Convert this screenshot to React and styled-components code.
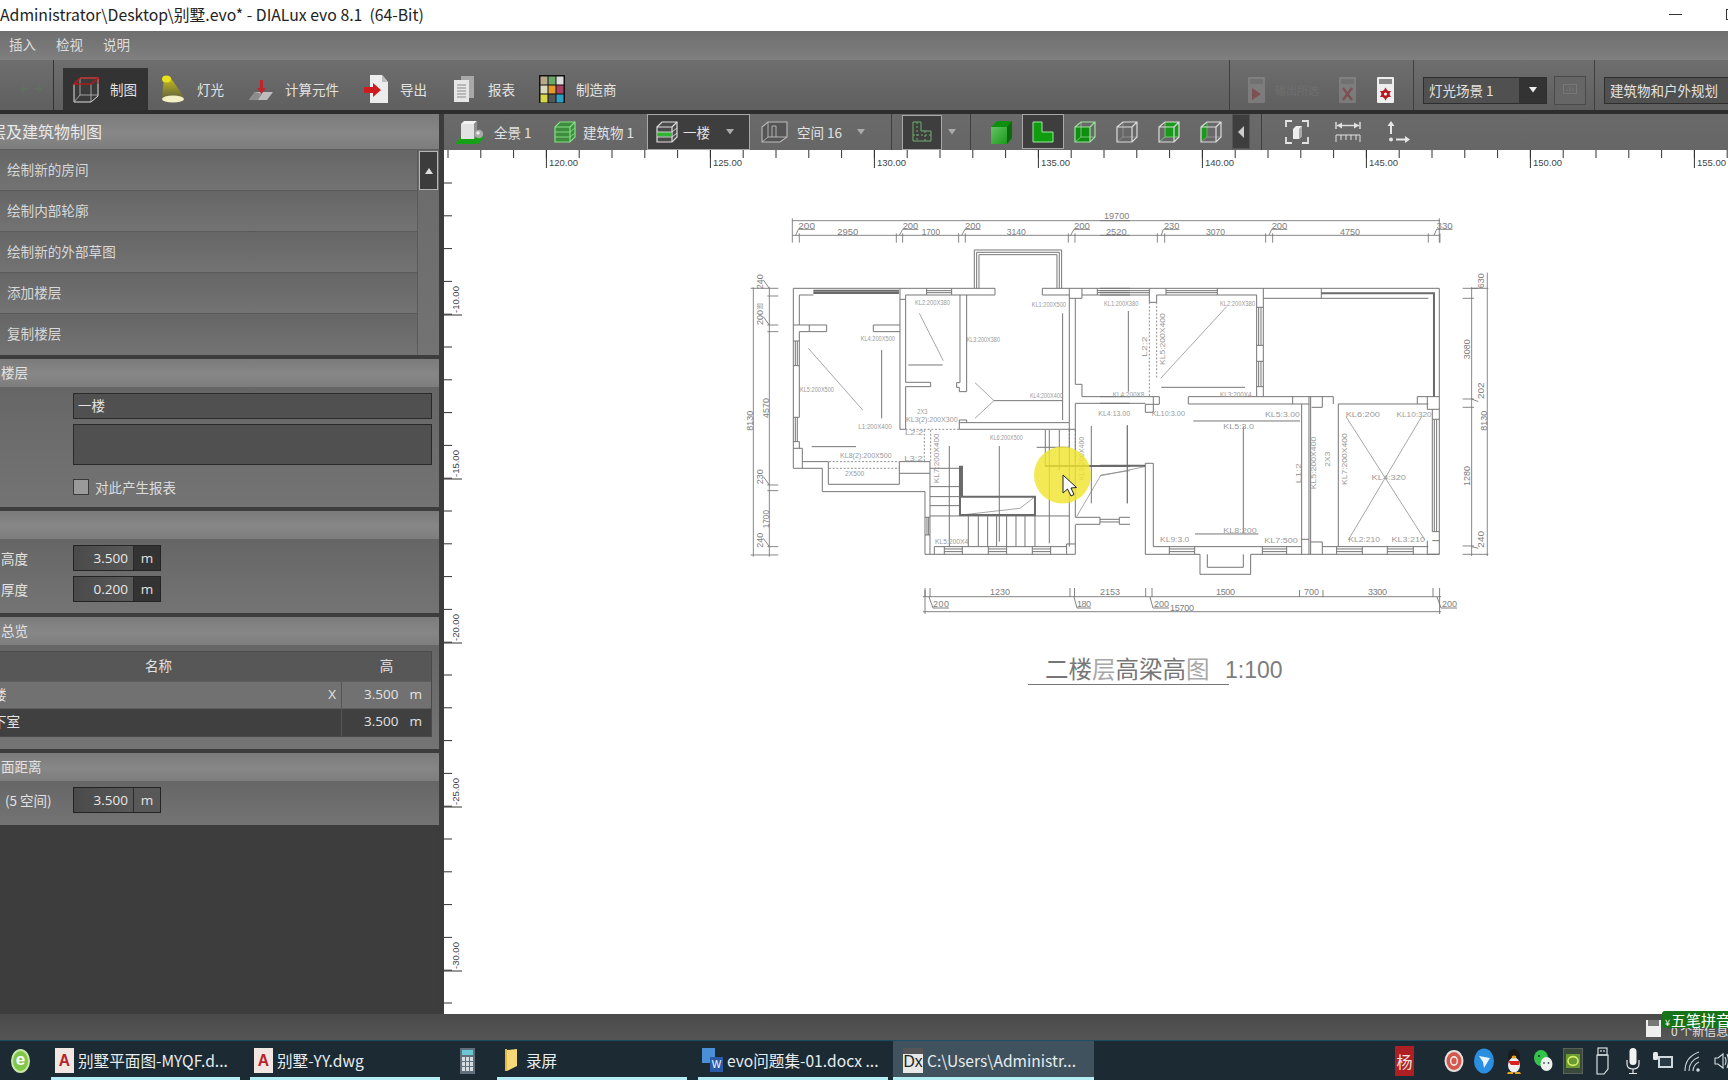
import styled, { createGlobalStyle } from "styled-components";

const GlobalStyle = createGlobalStyle`
  html, body {
    margin: 0;
    padding: 0;
    background: #3c3c3c;
    overflow: hidden;
  }
  * {
    box-sizing: border-box;
  }
`;

const uiFont = `"Noto Sans CJK SC", "Open Sans", "Liberation Sans", sans-serif`;
const numFont = `"Open Sans", "Noto Sans CJK SC", sans-serif`;

/* ---------- small drawn icons ---------- */

function Cube({ front = "none", back = "none", left = "none", stroke = "#ddd", inner = "#aaa", size = 24 }) {
  return (
    <svg width={size} height={size} viewBox="0 0 24 24">
      <path d="M8 2 H22 V17 H8 Z" fill={back} />
      <path d="M2 7 L8 2 V17 L2 22 Z" fill={left} />
      <path d="M2 7 H17 V22 H2 Z" fill={front} />
      <path d="M8 2 V17 H22 M8 17 L2 22" fill="none" stroke={inner} strokeWidth="0.8" />
      <path d="M2 7 L8 2 H22 V17 L17 22 H2 Z M2 7 H17 V22 M17 7 L22 2" fill="none" stroke={stroke} strokeWidth="1.2" />
    </svg>
  );
}

function DrawIcon() {
  return (
    <svg width="26" height="30" viewBox="0 0 26 30">
      <path d="M1 10 L7 4 H25 V22 L18 28 H1 Z" fill="#3a3a3a" stroke="#ddd" strokeWidth="1" />
      <path d="M18 10 V28 M7 4 V21 H25 M7 21 L1 28" fill="none" stroke="#bbb" strokeWidth="0.8" />
      <path d="M1 10 L7 4 H25 L18 10 Z M1 10 H18" fill="none" stroke="#b01c1c" strokeWidth="1.6" />
      <path d="M25 4 V10" stroke="#b01c1c" strokeWidth="1" />
    </svg>
  );
}

function LightIcon() {
  return (
    <svg width="26" height="30" viewBox="0 0 26 30">
      <defs>
        <linearGradient id="beam" x1="0" y1="0" x2="0" y2="1">
          <stop offset="0" stopColor="#c9c21a" />
          <stop offset="1" stopColor="#6b6a3c" />
        </linearGradient>
      </defs>
      <path d="M4 5 L10 3 L24 23 H2 Z" fill="url(#beam)" />
      <ellipse cx="6.5" cy="5" rx="4.5" ry="3.5" fill="#e8e21c" />
      <ellipse cx="13" cy="25" rx="11" ry="3.6" fill="#f3f0c4" />
    </svg>
  );
}

function CalcIcon() {
  return (
    <svg width="26" height="26" viewBox="0 0 26 26">
      <path d="M7 16 H25 L19 24 H1 Z" fill="#bdbdbd" />
      <path d="M7 16 L1 24 H10 L14 18 Z" fill="#8c8c8c" />
      <path d="M12 4 H15 V12 H18 L13.5 18 L9 12 H12 Z" fill="#c0242a" />
    </svg>
  );
}

function ExportIcon() {
  return (
    <svg width="26" height="30" viewBox="0 0 26 30">
      <path d="M7 1 H19 L25 8 V29 H7 Z" fill="#ececec" />
      <path d="M19 1 L25 8 H19 Z" fill="#bdbdbd" />
      <path d="M1 13 H10 V9 L18 16 L10 23 V19 H1 Z" fill="#cc1c20" />
    </svg>
  );
}

function ReportIcon() {
  return (
    <svg width="22" height="28" viewBox="0 0 22 28">
      <rect x="8" y="1" width="13" height="22" fill="#a8a8a8" />
      <rect x="1" y="5" width="15" height="22" fill="#e6e6e6" />
      <path d="M4 10 H13 M4 13 H13 M4 16 H13 M4 19 H13 M4 22 H13" stroke="#8a8a8a" strokeWidth="1.2" />
    </svg>
  );
}

function MakerIcon() {
  const cells = ["#b9a98a", "#6aa86a", "#dcdcdc", "#d9d9c0", "#e39b2c", "#a84060", "#d6d84a", "#555", "#2f9fc4"];
  return (
    <svg width="26" height="28" viewBox="0 0 26 28">
      <rect width="26" height="28" fill="#111" />
      {cells.map((c, i) => (
        <rect key={i} x={1.5 + (i % 3) * 8} y={1.5 + Math.floor(i / 3) * 9} width="7" height="8" fill={c} />
      ))}
    </svg>
  );
}

function PhoneIcon({ glyph, dim }) {
  return (
    <svg width="17" height="26" viewBox="0 0 17 26" opacity={dim ? 0.28 : 1}>
      <rect width="17" height="26" rx="1" fill={dim ? "#bbb" : "#eee"} />
      <rect x="2" y="2" width="13" height="5" fill="#888" />
      {glyph === "play" && <path d="M4 11 L13 17 L4 23 Z" fill="#c02028" />}
      {glyph === "x" && <path d="M4 11 L13 23 M13 11 L4 23" stroke="#c02028" strokeWidth="2.4" />}
      {glyph === "gear" && (
        <>
          <circle cx="8.5" cy="17" r="4" fill="#b81a22" />
          <path d="M8.5 10.5 L10.5 14 H6.5 Z M8.5 23.5 L10.5 20 H6.5 Z M3 14 H7 L5 17.5 Z M14 14 H10 L12 17.5 Z M3 20 H7 L5 16.5 Z M14 20 H10 L12 16.5 Z" fill="#b81a22" />
          <circle cx="8.5" cy="17" r="1.6" fill="#eee" />
        </>
      )}
    </svg>
  );
}

function SceneIcon() {
  return (
    <svg width="30" height="28" viewBox="0 0 30 28">
      <path d="M6 19 H30 L23 26 H0 Z" fill="#16a016" />
      <rect x="6" y="6" width="13" height="15" fill="#e2e2e2" />
      <path d="M6 6 L9 3 H22 L19 6 Z" fill="#f3f3f3" />
      <path d="M19 6 L22 3 V18 L19 21 Z" fill="#8f8f8f" />
      <circle cx="24" cy="16" r="4.2" fill="#a9a9a9" />
      <circle cx="23" cy="15" r="1.8" fill="#e8e8e8" />
    </svg>
  );
}

function StackIcon({ floors }) {
  const edge = floors ? "#ddd" : "#86e086";
  return (
    <svg width="24" height="24" viewBox="0 0 24 24">
      <path d="M2 7 L7 2 H22 V17 L17 22 H2 Z" fill={floors ? "#4a4a4a" : "#3e8c3e"} stroke={edge} strokeWidth="1.2" />
      <path d="M2 7 H17 V22 M17 7 L22 2" fill="none" stroke={edge} strokeWidth="1.2" />
      {floors && <rect x="2.6" y="12" width="14" height="4.6" fill="#2fb52f" />}
      <path d="M2 12 H17 M2 17 H17 M17 12 L22 8 M17 17 L22 13" stroke={edge} strokeWidth="0.9" />
    </svg>
  );
}

function RoomIcon() {
  return (
    <svg width="28" height="24" viewBox="0 0 28 24">
      <path d="M2 7 L8 2 H27 V17 L20 22 H2 Z" fill="#555" stroke="#bbb" strokeWidth="1.1" />
      <path d="M8 2 V17 H27 M8 17 L2 22 M12 6 V17 M16 6 V17 M12 6 H16" fill="none" stroke="#bbb" strokeWidth="0.9" />
    </svg>
  );
}

function PlanIcon() {
  return (
    <svg width="24" height="24" viewBox="0 0 24 24" fill="none" stroke="#6fae6f" strokeWidth="1">
      <path d="M3 2 H11 V11 H21 V21 H3 Z" />
      <path d="M7 2 V21 M3 15 H21 M15 11 V21" strokeDasharray="2 2" />
    </svg>
  );
}

function SolidLIcon() {
  return (
    <svg width="24" height="24" viewBox="0 0 24 24">
      <path d="M2 2 H11 V12 H22 V22 H2 Z" fill="#0f9c0f" stroke="#9eea9e" strokeWidth="1" />
    </svg>
  );
}

function SolidCubeIcon() {
  return (
    <svg width="24" height="26" viewBox="0 0 24 26">
      <defs>
        <linearGradient id="cubeFace" x1="0" y1="0" x2="1" y2="1">
          <stop offset="0" stopColor="#62c462" />
          <stop offset="1" stopColor="#1c9a1c" />
        </linearGradient>
      </defs>
      <path d="M2 8 L8 2 H23 L18 8 Z" fill="#0f8f0f" />
      <path d="M18 8 L23 2 V19 L18 25 Z" fill="#0a6b0a" />
      <rect x="2" y="8" width="16" height="17" fill="url(#cubeFace)" />
    </svg>
  );
}

function FitIcon() {
  return (
    <svg width="24" height="24" viewBox="0 0 24 24">
      <path d="M1 7 V1 H7 M17 1 H23 V7 M23 17 V23 H17 M7 23 H1 V17" fill="none" stroke="#e4e4e4" strokeWidth="1.8" />
      <path d="M8 9 L11 6 H17 V16 L14 19 H8 Z" fill="#eee" />
      <path d="M14 9 L17 6 V16 L14 19 Z" fill="#aaa" />
    </svg>
  );
}

function MeasureIcon() {
  return (
    <svg width="26" height="24" viewBox="0 0 26 24" fill="none" stroke="#e2e2e2">
      <path d="M1 2 V9 M25 2 V9" strokeWidth="1.4" />
      <path d="M2 5.5 H24" strokeWidth="1.4" />
      <path d="M2 5.5 L7 2.5 V8.5 Z M24 5.5 L19 2.5 V8.5 Z" fill="#e2e2e2" stroke="none" />
      <path d="M1 22 V15 H25 V22 M6 15 V20 M11 15 V20 M16 15 V20 M21 15 V20" strokeWidth="1" />
    </svg>
  );
}

function AxisIcon() {
  return (
    <svg width="24" height="24" viewBox="0 0 24 24" fill="#e6e6e6">
      <path d="M4 1 L7.5 6 H5 V14 H3 V6 H0.5 Z" />
      <circle cx="4" cy="19.5" r="2" />
      <path d="M9 18.5 H18 V16 L23 19.5 L18 23 V20.5 H9 Z" />
    </svg>
  );
}

function BackArrows() {
  return (
    <svg width="26" height="10" viewBox="0 0 26 10" opacity="0.45">
      <path d="M1 5 L6 1 V9 Z M25 5 L20 1 V9 Z" fill="#5d7a5d" />
      <path d="M6 5 H11 M15 5 H20" stroke="#5d7a5d" strokeWidth="2" />
    </svg>
  );
}

function CaretDown({ color = "#aaa", size = 8 }) {
  return (
    <svg width={size} height={size * 0.7} viewBox="0 0 10 7">
      <path d="M0 0 H10 L5 7 Z" fill={color} />
    </svg>
  );
}

function Folder() {
  return (
    <svg width="14" height="24" viewBox="0 0 14 24">
      <path d="M1 1 H3 V23 H1 Z" fill="#e3b93f" />
      <path d="M3 2 L13 1 V18 L3 23 Z" fill="#f6d878" />
    </svg>
  );
}

function CalcAppIcon() {
  return (
    <svg width="15" height="26" viewBox="0 0 15 26">
      <rect width="15" height="26" fill="#5f6f7c" />
      <rect x="2" y="2" width="11" height="5" fill="#6cc6d6" />
      {[0, 1, 2, 3, 4, 5, 6, 7, 8].map((i) => (
        <rect key={i} x={2 + (i % 3) * 4} y={9 + Math.floor(i / 3) * 5} width="3" height="4" fill="#d5dde2" />
      ))}
    </svg>
  );
}

function TrayIcon({ kind }) {
  if (kind === "rec") {
    return (
      <svg width="20" height="24" viewBox="0 0 20 24">
        <ellipse cx="10" cy="12" rx="9.5" ry="11" fill="#e6e1de" />
        <ellipse cx="10" cy="12" rx="7.5" ry="9" fill="#d4584c" />
        <ellipse cx="10" cy="12" rx="4" ry="5" fill="#eee" />
        <ellipse cx="10" cy="12" rx="2.6" ry="3.2" fill="#d4584c" />
      </svg>
    );
  }
  if (kind === "blue") {
    return (
      <svg width="20" height="26" viewBox="0 0 20 26">
        <ellipse cx="10" cy="13" rx="10" ry="12.5" fill="#2a8fe0" />
        <path d="M5 8 L16 10 L10 20 L9 14 Z" fill="#e8f4ff" />
      </svg>
    );
  }
  if (kind === "qq") {
    return (
      <svg width="16" height="26" viewBox="0 0 16 26">
        <ellipse cx="8" cy="9" rx="6" ry="8" fill="#1a1a1a" />
        <ellipse cx="8" cy="17" rx="6" ry="7.5" fill="#eee" />
        <path d="M2 13 H14 L13 17 H5 Z" fill="#d8201c" />
        <ellipse cx="8" cy="9" rx="2.4" ry="1.5" fill="#e8a41c" />
        <path d="M2 24 H7 V26 H1 Z M9 24 H14 L15 26 H9 Z" fill="#e8a41c" />
      </svg>
    );
  }
  if (kind === "wechat") {
    return (
      <svg width="20" height="24" viewBox="0 0 20 24">
        <ellipse cx="8" cy="9" rx="7" ry="8" fill="#34c44a" />
        <ellipse cx="13.5" cy="15" rx="6" ry="7" fill="#eef2ee" />
        <circle cx="6" cy="7" r="1" fill="#123" />
        <circle cx="11" cy="14" r="0.9" fill="#456" />
        <circle cx="15.5" cy="14" r="0.9" fill="#456" />
      </svg>
    );
  }
  if (kind === "nvidia") {
    return (
      <svg width="20" height="26" viewBox="0 0 20 26">
        <rect width="20" height="26" rx="2" fill="#3a4a3a" stroke="#777" />
        <rect x="3" y="6" width="14" height="14" fill="#6a9a30" />
        <ellipse cx="10" cy="13" rx="5" ry="4.4" fill="none" stroke="#d3ec6c" strokeWidth="1.6" />
      </svg>
    );
  }
  if (kind === "usb") {
    return (
      <svg width="16" height="28" viewBox="0 0 16 28" fill="none" stroke="#e8eef0" strokeWidth="1.1">
        <rect x="3" y="1" width="9" height="7" />
        <path d="M2 8 H13 V22 L9 27 H2 Z" />
        <path d="M6 3 V5 M9 3 V5" />
      </svg>
    );
  }
  if (kind === "mic") {
    return (
      <svg width="14" height="28" viewBox="0 0 14 28">
        <rect x="3.5" y="1" width="7" height="17" rx="3.5" fill="#f2f2f2" />
        <path d="M1 13 V17 Q1 22 7 22 Q13 22 13 17 V13 M7 22 V26 M3 26.5 H11" fill="none" stroke="#e8e8e8" strokeWidth="1.2" />
      </svg>
    );
  }
  if (kind === "plug") {
    return (
      <svg width="20" height="20" viewBox="0 0 20 20">
        <rect x="5" y="5" width="15" height="12" fill="#cfd8dc" />
        <rect x="7" y="7" width="11" height="8" fill="#2a3a44" />
        <rect x="0" y="1" width="5" height="8" rx="1.5" fill="#e8e8e8" />
      </svg>
    );
  }
  if (kind === "wifi") {
    return (
      <svg width="16" height="24" viewBox="0 0 16 24" fill="none" stroke="#cfd8dc" strokeWidth="1.1">
        <path d="M1 22 Q1 8 15 3 M5 22 Q5 12 15 8 M9 22 Q9 16 15 13" />
        <circle cx="14" cy="21" r="1.2" fill="#cfd8dc" />
      </svg>
    );
  }
  return (
    <svg width="16" height="24" viewBox="0 0 16 24" fill="none" stroke="#d6dde0" strokeWidth="1.1">
      <path d="M1 9 H4 L9 5 V19 L4 15 H1 Z" />
      <path d="M11 8 Q13 12 11 16 M13 5 Q16 12 13 19" />
    </svg>
  );
}

/* ---------- drawing canvas ---------- */

const wallsA = `
M190 805 V265 H795 V285 H527 M250 285 H208 V375 M190 375 H290 V395 H208 V423 M238 375 V395 M430 375 H510 M430 395 H510 M430 375 V395
M190 423 H208 M190 497 H208 M196 423 V497 M202 423 V497 M208 423 V652 M190 652 H208 M190 725 H208 M196 652 V725 M202 652 V725 M208 725 V745 M190 745 H217 V805 H190
M510 265 V688 M527 285 V547 M527 560 V688 M510 298 H527
M590 265 V285 M665 265 V285 M590 272 H665 M590 278 H665
M733 265 V150 H995 V265 M740 265 V157 H988 V265 M747 265 V164 H981 V265
M937 285 V265 H1200 M937 285 H1018 M1018 265 V668 M1018 295 H1056 V265 M1036 295 V553 H1056 V590 H1200 M1056 285 H1200
M1102 265 V285 M1102 272 H1200 M1102 278 H1200
M690 285 V548 H680 V562 H688 V575 H710 V285
M217 785 H295 M508 785 H600 V1063 M277 805 H217 M277 805 V875 H585 V1063 M295 785 V853 H508 V785 M508 820 H600
M585 1063 H1036 M613 1040 H1010 M613 1040 V1063 M1010 1032 H1036 M1010 1032 V1063 M1036 975 V1063 M1036 973 H1110 M1036 952 H1110 M1110 952 V973 M1168 952 V973 M1110 958 H1168 M1110 966 H1168 M1168 952 H1200 M1168 973 H1200
M643 1040 V1063 M697 1040 V1063 M643 1047 H697 M643 1055 H697 M775 1040 V1063 M830 1040 V1063 M775 1047 H830 M775 1055 H830 M907 1040 V1063 M962 1040 V1063 M907 1047 H962 M907 1055 H962
M585 952 H600 M585 1005 H600 M591 952 V1005 M596 952 V1005
M600 948 H1018 M600 860 H690 M600 890 H690 M600 917 H690 M600 805 H690 M715 948 V1040 M745 948 V1040 M773 948 V1040 M800 948 V1040 M830 948 V1040 M858 948 V1040 M885 948 V1040 M915 948 V1040
M658 738 V1040 M808 738 V1025 M958 690 V1030 M988 690 V810 M946 690 V800 M1018 668 V1040 M920 742 H1018
M510 688 H527 M688 688 H1036 M688 668 H1018 M688 660 H710 V668 M688 660 V688
M1036 610 V952 M1036 610 H1200
M455 450 V655 M245 740 H378 M535 495 H638 M527 547 H602 V560 H527 M792 602 H998 M998 340 V660 M1084 678 V910 M1192 678 V910
`;

const thinA = `M235 445 L398 630 M568 340 L640 482 M735 548 L792 602 L735 655 M1040 950 L1113 825 L1200 812 M695 945 L870 925 L890 910 L915 890`;
const thickA = `M250 272 H507 M250 279 H507 M690 797 V945 H915 V890 H696 V797 M945 798 H1200`;
const dashA = `M527 688 H688 M297 785 H508 M297 805 H508 M583 690 V785 M602 690 V785 M1018 690 V790 M1036 690 V790`;

const wallsB = `
M0 265 H1018 V1063 H452 V1123 H300 V1063 H136 V790 H160 V1040 H605 V612 H265 V590 H470 V285 H170 V307 H148 V265
M0 285 H148 M0 272 H148 M0 278 H148 M198 265 V285 M352 265 V285 M198 272 H352 M198 278 H352
M490 265 V590 M470 322 H490 M476 322 V436 M483 322 V436 M470 436 H490 M470 484 H490 M476 484 V560 M483 484 V560 M470 560 H490 M470 590 H700 V612
M490 295 H985 M664 265 V295 M578 590 V612
M0 590 H178 V613 H160 M160 590 V613 H136 V637 H160 V613 M136 610 H0
M322 1063 V1102 H430 V1063 M208 1040 V1063 M284 1040 V1063 M208 1047 H284 M208 1055 H284 M487 1040 V1063 M560 1040 V1063 M487 1047 H560 M487 1055 H560
M605 612 H628 M627 590 V1063 M605 1018 H627 M632 590 V1063 M632 1026 H667 V1063 M635 622 H667 V590 M605 1040 V1063 M667 1040 H985
M715 612 V1040 M715 612 H985 M952 590 V612 M952 590 H1018 M982 590 V628 H1018 M997 628 V995 M1003 658 V995 M1010 658 V995 M997 658 H1018 M997 995 H1018 M997 1022 H1018 M982 1022 V1063 H1018
M710 1040 V1063 M787 1040 V1063 M710 1047 H787 M710 1055 H787 M862 1040 V1063 M940 1040 V1063 M862 1047 H940 M862 1055 H940
M184 562 H435 M85 333 V575 M82 675 V910 M430 680 V1000 M280 663 H600 M285 1002 H475
`;

const thinB = `M738 650 L975 1020 M965 650 L745 1020 M380 320 L182 535 M0 828 L135 800`;
const thickB = `M664 280 H1002 V590 M0 797 H135`;
const dashB = `M148 307 V590 M170 307 V535`;

const labelsA = [
  [392, 422, "KL4:200X500", 103],
  [555, 315, "KL2:200X380", 105],
  [905, 320, "KL1:200X500", 103],
  [710, 425, "KL3:200X380", 100],
  [210, 575, "KL5:200X500", 102],
  [385, 688, "L1:200X400", 100],
  [900, 595, "KL4:200X400", 98],
  [562, 642, "2X3", 30],
  [528, 665, "KL3(2):200X300", 155],
  [780, 720, "KL6:200X500", 98],
  [330, 775, "KL8(2):200X500", 155],
  [345, 827, "2X500", 58],
  [615, 1032, "KL5:200X4", 100],
  [525, 705, "L2:2", 55],
  [523, 783, "L3:2", 55],
  [628, 850, "KL7:200X400", 150, -90],
  [1062, 840, "KL9:200X400", 130, -90],
];

const labelsB = [
  [12, 318, "KL1:200X380", 103],
  [360, 318, "KL2:200X380", 105],
  [38, 590, "KL4:200X8", 95],
  [360, 590, "KL3:200X4", 95],
  [-5, 648, "KL4:13.00", 95],
  [155, 647, "KL10:3.00", 100],
  [495, 650, "KL5:3.00", 105],
  [370, 688, "KL5:3.0", 92],
  [370, 1000, "KL8:200", 100],
  [180, 1025, "KL9:3.0", 88],
  [493, 1028, "KL7:500", 100],
  [737, 650, "KL6:200", 103],
  [890, 650, "KL10:320", 105],
  [815, 840, "KL4:320", 103],
  [745, 1027, "KL2:210", 95],
  [875, 1027, "KL3:210", 100],
  [196, 495, "KL5:200X400", 155, -90],
  [142, 470, "L2:2", 60, -90],
  [648, 868, "KL5:200X400", 158, -90],
  [690, 800, "2X3", 45, -90],
  [741, 855, "KL7:200X400", 155, -90],
  [602, 850, "L1:2", 60, -90],
];

const dimsA = [
  [205, 88, "200", 50], [322, 105, "2950", 63], [518, 88, "200", 47], [575, 105, "1700", 55],
  [705, 88, "200", 47], [830, 105, "3140", 58], [1032, 88, "200", 48], [1128, 105, "2520", 62],
  [1122, 58, "19700", 76],
  [98, 268, "240", 45, -90], [98, 375, "200", 45, -90], [98, 328, "380", 18, -90], [118, 654, "4570", 60, -90],
  [68, 692, "8130", 60, -90], [98, 853, "230", 45, -90], [118, 985, "1700", 55, -90], [98, 1043, "240", 45, -90],
];

const dimsB = [
  [192, 88, "230", 46], [318, 105, "3070", 57], [515, 88, "200", 47], [720, 105, "4750", 60], [1010, 88, "330", 48],
  [1153, 265, "630", 45, -90], [1110, 478, "3080", 60, -90], [1153, 597, "202", 50, -90],
  [1161, 692, "8130", 60, -90], [1110, 858, "1280", 60, -90], [1153, 1043, "240", 50, -90],
];

const ticksA = `M187 62 H1200 M187 106 H1200 M187 55 V128 M208 100 V128 M499 100 V128 M518 100 V128 M686 100 V128 M706 100 V128 M1015 100 V128 M1035 100 V128
M205 88 H255 M205 88 L197 106 M518 88 H565 M518 88 L508 106 M705 88 H752 M705 88 L695 106 M1032 88 H1080 M1032 88 L1022 106
M70 262 V1070 M118 262 V1070 M62 265 H145 M112 288 H145 M112 375 H145 M112 395 H145 M112 855 H145 M112 872 H145 M112 1040 H145 M62 1065 H145
M118 265 L100 240 M118 375 L100 350 M118 855 L100 830 M118 1040 L100 1015`;

const ticksB = `M0 62 H1020 M0 106 H1020 M1018 55 V128 M172 100 V128 M194 100 V128 M497 100 V128 M518 100 V128 M985 100 V128 M1020 100 V128
M190 88 H238 M190 88 L184 106 M515 88 H562 M515 88 L507 106 M1010 88 H1058 M1010 88 L1002 106
M1115 262 V1068 M1162 218 V1068 M1088 265 H1165 M1088 295 H1122 M1088 597 H1122 M1088 622 H1122 M1088 1038 H1122 M1088 1063 H1165
M1115 265 L1135 265 M1115 597 L1135 605 M1115 1040 L1135 1045`;

function PlanLabels({ items, size = 24, fill = "#9a9a9a" }) {
  return items.map(([x, y, text, len, rot]) => (
    <text
      key={`${x}-${y}`}
      x={x}
      y={y}
      fontSize={size}
      fill={fill}
      fontFamily='"Liberation Sans", sans-serif'
      textLength={len}
      lengthAdjust="spacingAndGlyphs"
      transform={rot ? `rotate(${rot} ${x} ${y})` : undefined}
    >
      {text}
    </text>
  ));
}

function PlanLines({ walls, thin, thick, dash, ticks }) {
  return (
    <g fill="none" stroke="#757575">
      <path d={ticks} strokeWidth="2.6" />
      <path d={walls} strokeWidth="3" />
      <path d={thin} strokeWidth="2.2" stroke="#858585" />
      <path d={thick} strokeWidth="6" stroke="#6a6a6a" />
      <path d={dash} strokeWidth="2.4" strokeDasharray="6 5" />
    </g>
  );
}

function Ruler() {
  const topMinor = [];
  for (let x = 448; x < 1728; x += 32.8) topMinor.push(x);
  const leftMinor = [];
  for (let y = 183; y < 1014; y += 32.8) leftMinor.push(y);
  const topMajor = [120, 125, 130, 135, 140, 145, 150, 155];
  const leftMajor = [-10, -15, -20, -25, -30];
  return (
    <g stroke="#333" strokeWidth="1">
      {topMinor.map((x) => (
        <line key={x} x1={x} y1="150" x2={x} y2="158" />
      ))}
      {leftMinor.map((y) => (
        <line key={y} x1="444" y1={y} x2="452" y2={y} />
      ))}
      {topMajor.map((v, i) => (
        <g key={v}>
          <line x1={546.4 + i * 164} y1="150" x2={546.4 + i * 164} y2="168" />
          <text x={549 + i * 164} y="166" fontSize="9.5" fill="#444" stroke="none" fontFamily='"Liberation Sans", sans-serif'>
            {v}.00
          </text>
        </g>
      ))}
      {leftMajor.map((v, i) => (
        <g key={v}>
          <line x1="444" y1={315 + i * 164} x2="462" y2={315 + i * 164} />
          <text
            x="459"
            y={313 + i * 164}
            fontSize="9.5"
            fill="#444"
            stroke="none"
            fontFamily='"Liberation Sans", sans-serif'
            transform={`rotate(-90 459 ${313 + i * 164})`}
          >
            {v}.00
          </text>
        </g>
      ))}
    </g>
  );
}

function Drawing() {
  return (
    <CanvasSvg viewBox="444 150 1284 864">
      <Ruler />
      <g transform="translate(730 200) scale(0.3333)">
        <PlanLines walls={wallsA} thin={thinA} thick={thickA} dash={dashA} ticks={ticksA} />
        <PlanLabels items={labelsA} />
        <PlanLabels items={dimsA} size={27} fill="#808080" />
      </g>
      <g transform="translate(1100 200) scale(0.3333)">
        <PlanLines walls={wallsB} thin={thinB} thick={thickB} dash={dashB} ticks={ticksB} />
        <PlanLabels items={labelsB} />
        <PlanLabels items={dimsB} size={27} fill="#808080" />
      </g>

      {/* bottom dimension chain */}
      <g stroke="#757575" fill="none" strokeWidth="0.9">
        <path d="M923 596.7 H1441 M923 611.7 H1441 M925 588 V597 M930 588 V597 M925 590 V614 M1070 588 V597 M1074.5 588 V597 M1145.7 588 V597 M1152 588 V597 M1433 588 V597 M1439.6 588 V614 M1299.5 590 V597 M1323 590 V597" />
        <path d="M929 597 L933 608 H949 M1074 597 L1077 608 H1091 M1150 597 L1153 608 H1169 M1437 597 L1441 608 H1457" />
      </g>
      <g fontFamily='"Liberation Sans", sans-serif' fontSize="9" fill="#808080">
        <text x="990" y="595" textLength="20">1230</text>
        <text x="1100" y="595" textLength="20">2153</text>
        <text x="1216" y="595" textLength="19">1500</text>
        <text x="1304" y="595" textLength="15">700</text>
        <text x="1368" y="595" textLength="19">3300</text>
        <text x="933" y="607" textLength="16">200</text>
        <text x="1077" y="607" textLength="14">180</text>
        <text x="1154" y="607" textLength="15">200</text>
        <text x="1170" y="611" textLength="24">15700</text>
        <text x="1442" y="607" textLength="15">200</text>
      </g>

      <text x="1045" y="678" fontSize="23.5" fill="#777" fontFamily='"Noto Sans CJK SC", sans-serif'>
        二楼<tspan fill="#a8a8a8">层</tspan>高梁高<tspan fill="#a8a8a8">图</tspan>
      </text>
      <text x="1225" y="678" fontSize="23" fill="#7d7d7d" fontFamily='"Liberation Sans", sans-serif'>
        1:100
      </text>
      <line x1="1028" y1="684.5" x2="1229" y2="684.5" stroke="#777" strokeWidth="1" />

      {/* pointer highlight */}
      <circle cx="1062.5" cy="475" r="28.5" fill="#f0e42e" opacity="0.82" />
      <path d="M1063 475 L1063 493 L1067.5 489 L1071 496 L1074 494.5 L1071 488 L1076.5 487.5 Z" fill="#fff" stroke="#222" strokeWidth="1" />
    </CanvasSvg>
  );
}

/* ---------- page data ---------- */

const tools = [
  { label: "灯光", Icon: LightIcon },
  { label: "计算元件", Icon: CalcIcon },
  { label: "导出", Icon: ExportIcon },
  { label: "报表", Icon: ReportIcon },
  { label: "制造商", Icon: MakerIcon },
];

const actions = ["绘制新的房间", "绘制内部轮廓", "绘制新的外部草图", "添加楼层", "复制楼层"];

export default function App() {
  return (
    <Page>
      <GlobalStyle />
      <TitleBar>
        <TitleText>Administrator\Desktop\别墅.evo* - DIALux evo 8.1&nbsp;&nbsp;(64-Bit)</TitleText>
        <WindowButtons>
          <MinimizeMark />
          <MaximizeMark />
        </WindowButtons>
      </TitleBar>

      <MenuBar>
        <MenuItem>插入</MenuItem>
        <MenuItem>检视</MenuItem>
        <MenuItem>说明</MenuItem>
      </MenuBar>

      <Toolbar>
        <BackCell>
          <BackArrows />
        </BackCell>
        <ActiveTool>
          <ToolIcon>
            <DrawIcon />
          </ToolIcon>
          <span>制图</span>
        </ActiveTool>
        <ToolGroup>
          {tools.map(({ label, Icon }) => (
            <ToolItem key={label}>
              <ToolIcon>
                <Icon />
              </ToolIcon>
              <span>{label}</span>
            </ToolItem>
          ))}
        </ToolGroup>
        <ToolSection $width={184} $left={18}>
          <PhoneIcon glyph="play" dim />
          <FaintLabel>输出所选</FaintLabel>
          <PhoneIcon glyph="x" dim />
          <GearSlot>
            <PhoneIcon glyph="gear" />
          </GearSlot>
        </ToolSection>
        <ToolSection $width={181} $left={9}>
          <Select $width={124}>
            <SelectText>灯光场景 1</SelectText>
            <SelectArrow>
              <CaretDown color="#eee" />
            </SelectArrow>
          </Select>
          <SceneButton>
            <svg width="14" height="12" viewBox="0 0 14 12" fill="none" stroke="#777">
              <rect x="0.5" y="0.5" width="13" height="9" />
              <path d="M7 7 V3 M4 7 V5 M10 7 V4" />
            </svg>
          </SceneButton>
        </ToolSection>
        <ToolSection $width={134} $left={9}>
          <Select $width={130}>
            <SelectText>建筑物和户外规划</SelectText>
          </Select>
        </ToolSection>
      </Toolbar>

      <Main>
        <Side>
          <SideSection>
            <MainHeader>层及建筑物制图</MainHeader>
            <ActionArea>
              <ActionList>
                {actions.map((a) => (
                  <ActionRow key={a}>{a}</ActionRow>
                ))}
              </ActionList>
              <ScrollColumn>
                <ScrollButton>
                  <svg width="8" height="6" viewBox="0 0 8 6">
                    <path d="M0 6 H8 L4 0 Z" fill="#ddd" />
                  </svg>
                </ScrollButton>
              </ScrollColumn>
            </ActionArea>
          </SideSection>

          <SideSection>
            <SubHeader>楼层</SubHeader>
            <SectionBody $bottom={12}>
              <FieldRow>
                <TextBox $height={26}>一楼</TextBox>
              </FieldRow>
              <FieldRow>
                <TextBox $height={41} />
              </FieldRow>
              <CheckRow>
                <CheckBox />
                <span>对此产生报表</span>
              </CheckRow>
            </SectionBody>
          </SideSection>

          <SideSection>
            <SubHeader />
            <SectionBody $bottom={11}>
              <FieldRow>
                <FieldLabel>高度</FieldLabel>
                <NumberBox value="3.500" />
              </FieldRow>
              <FieldRow>
                <FieldLabel>厚度</FieldLabel>
                <NumberBox value="0.200" />
              </FieldRow>
            </SectionBody>
          </SideSection>

          <SideSection>
            <SubHeader>总览</SubHeader>
            <SectionBody $bottom={12}>
              <FloorTable>
                <TableHead $shift={25}>名称</TableHead>
                <TableHead>高</TableHead>
                <NameCell $clip={-7}>
                  <span>楼</span>
                  <span>X</span>
                </NameCell>
                <ValueCell>
                  <span>3.500</span>
                  <b>m</b>
                </ValueCell>
                <NameCell $clip={-7} $dark>
                  <span>下室</span>
                </NameCell>
                <ValueCell $dark>
                  <span>3.500</span>
                  <b>m</b>
                </ValueCell>
              </FloorTable>
            </SectionBody>
          </SideSection>

          <SideSection>
            <SubHeader>面距离</SubHeader>
            <SectionBody $bottom={12}>
              <FieldRow>
                <FieldLabel $indent={5}>(5 空间)</FieldLabel>
                <NumberBox value="3.500" flat />
              </FieldRow>
            </SectionBody>
          </SideSection>
        </Side>

        <Workspace>
          <ViewBar>
            <ViewCrumb $width={103} $left={11}>
              <SceneIcon />
              <span>全景 1</span>
            </ViewCrumb>
            <ViewCrumb $width={100} $left={6} $gap={6}>
              <StackIcon />
              <span>建筑物 1</span>
            </ViewCrumb>
            <ViewCrumb $width={103} $left={7} $gap={4} $active>
              <StackIcon floors />
              <span>一楼</span>
              <CaretSlot $left={12}>
                <CaretDown />
              </CaretSlot>
            </ViewCrumb>
            <ViewCrumb $width={142} $left={10} $last>
              <RoomIcon />
              <span>空间 16</span>
              <CaretSlot $left={6}>
                <CaretDown />
              </CaretSlot>
            </ViewCrumb>
            <ModeGroup>
              <ModeButton>
                <PlanIcon />
              </ModeButton>
              <ModeCaret>
                <CaretDown />
              </ModeCaret>
            </ModeGroup>
            <ViewGroup>
              <ViewButton>
                <SolidCubeIcon />
              </ViewButton>
              <ViewButton $active>
                <SolidLIcon />
              </ViewButton>
              <ViewButton>
                <Cube front="#0f8f0f" stroke="#9fe09f" inner="#8fcf8f" />
              </ViewButton>
              <ViewButton>
                <Cube stroke="#dcdcdc" inner="#999" />
              </ViewButton>
              <ViewButton>
                <Cube back="#1a9a1a" stroke="#dcdcdc" inner="#7fdc7f" />
              </ViewButton>
              <ViewButton>
                <Cube left="#1a9a1a" stroke="#dcdcdc" inner="#999" />
              </ViewButton>
              <CollapseButton>
                <svg width="6" height="12" viewBox="0 0 6 12">
                  <path d="M6 0 V12 L0 6 Z" fill="#ccc" />
                </svg>
              </CollapseButton>
            </ViewGroup>
            <ZoomGroup>
              <ZoomButton>
                <FitIcon />
              </ZoomButton>
              <ZoomButton>
                <MeasureIcon />
              </ZoomButton>
              <ZoomButton>
                <AxisIcon />
              </ZoomButton>
            </ZoomGroup>
          </ViewBar>
          <Canvas>
            <Drawing />
          </Canvas>
        </Workspace>
      </Main>

      <StatusBar>
        <StatusDisk>
          <svg width="15" height="17" viewBox="0 0 15 17">
            <rect width="15" height="17" fill="#eee" />
            <rect x="2" y="0" width="11" height="6" fill="#777" />
          </svg>
        </StatusDisk>
        <StatusText>0 个新信息</StatusText>
        <ImeBadge>
          <ImeChevron>¥</ImeChevron>五笔拼音
        </ImeBadge>
      </StatusBar>

      <Taskbar>
        <StartSlot>
          <IeIcon>e</IeIcon>
        </StartSlot>
        <TaskItem $width={189}>
          <CadBadge>A</CadBadge>
          <span>别墅平面图-MYQF.d...</span>
        </TaskItem>
        <TaskItem $width={190} $left={10}>
          <CadBadge>A</CadBadge>
          <span>别墅-YY.dwg</span>
        </TaskItem>
        <TaskSlot $width={57}>
          <CalcAppIcon />
        </TaskSlot>
        <TaskItem $width={190} $pad={7} $gap={8}>
          <Folder />
          <span>录屏</span>
        </TaskItem>
        <TaskItem $width={190} $left={11}>
          <WordBadge>
            <i>W</i>
          </WordBadge>
          <span>evo问题集-01.docx ...</span>
        </TaskItem>
        <TaskItem $width={201} $left={5} $active>
          <DxBadge>Dx</DxBadge>
          <span>C:\Users\Administr...</span>
        </TaskItem>
        <Tray>
          <SealIcon>杨</SealIcon>
          <TrayGroup>
            {["rec", "blue", "qq", "wechat", "nvidia", "usb", "mic", "plug", "wifi", "sound"].map((k) => (
              <TraySlot key={k}>
                <TrayIcon kind={k} />
              </TraySlot>
            ))}
          </TrayGroup>
        </Tray>
      </Taskbar>
    </Page>
  );
}

function NumberBox({ value, flat }) {
  return (
    <NumberField>
      <NumberValue>{value}</NumberValue>
      <NumberUnit $flat={flat}>m</NumberUnit>
    </NumberField>
  );
}

/* ---------- styles ---------- */

const Page = styled.div`
  width: 1728px;
  height: 1080px;
  display: flex;
  flex-direction: column;
  overflow: hidden;
  font-family: ${uiFont};
  font-size: 13.5px;
  color: #e2e2e2;
  background: #3c3c3c;
`;

const TitleBar = styled.div`
  height: 31px;
  flex: none;
  display: flex;
  align-items: center;
  justify-content: space-between;
  padding-bottom: 2px;
  background: #fff;
  color: #222;
`;

const TitleText = styled.div`
  font-size: 15.8px;
  white-space: nowrap;
`;

const WindowButtons = styled.div`
  display: flex;
  align-items: center;
  gap: 44px;
  margin-right: -9px;
`;

const MinimizeMark = styled.div`
  width: 13px;
  height: 1px;
  background: #333;
`;

const MaximizeMark = styled.div`
  width: 11px;
  height: 11px;
  border: 1px solid #333;
`;

const MenuBar = styled.div`
  height: 29px;
  flex: none;
  display: flex;
  align-items: center;
  gap: 20px;
  padding: 0 0 4px 9px;
  background: linear-gradient(#6f6f6f, #7f7f7f);
`;

const MenuItem = styled.span`
  color: #ddd;
`;

const Toolbar = styled.div`
  height: 50px;
  flex: none;
  display: flex;
  align-items: flex-end;
  background: linear-gradient(#6e6e6e, #5f5f5f);
`;

const BackCell = styled.div`
  width: 63px;
  height: 100%;
  flex: none;
  display: flex;
  align-items: center;
  padding-left: 18px;
  padding-top: 8px;
  background: linear-gradient(to right, transparent 53px, #333 53px, #333 54px, transparent 54px);
`;

const ToolIcon = styled.span`
  width: 26px;
  margin-right: 11px;
  display: flex;
  align-items: center;
  justify-content: center;
`;

const ActiveTool = styled.div`
  width: 85px;
  height: 42px;
  flex: none;
  display: flex;
  align-items: center;
  padding-left: 10px;
  background: #333;
`;

const ToolGroup = styled.div`
  display: flex;
  gap: 24px;
  margin-left: 12px;
  height: 42px;
  width: 1069px;
  flex: none;
`;

const ToolItem = styled.div`
  display: flex;
  align-items: center;
  white-space: nowrap;
`;

const ToolSection = styled.div`
  width: ${(p) => p.$width}px;
  height: 100%;
  flex: none;
  display: flex;
  align-items: center;
  padding-left: ${(p) => p.$left}px;
  padding-top: 10px;
  border-left: 1px solid #3f3f3f;
`;

const FaintLabel = styled.span`
  width: 44px;
  margin: 0 20px 0 10px;
  font-size: 11px;
  white-space: nowrap;
  color: #6f6f6f;
`;

const GearSlot = styled.span`
  display: flex;
  margin-left: 21px;
`;

const Select = styled.div`
  width: ${(p) => p.$width}px;
  height: 27px;
  flex: none;
  display: flex;
  align-items: stretch;
  border: 1px solid #2e2e2e;
  background: #505050;
`;

const SelectText = styled.span`
  flex: 1;
  padding-left: 5px;
  line-height: 25px;
  white-space: nowrap;
  overflow: hidden;
`;

const SelectArrow = styled.span`
  width: 27px;
  display: flex;
  align-items: center;
  justify-content: center;
  background: #333;
`;

const SceneButton = styled.div`
  width: 32px;
  height: 29px;
  margin-left: 7px;
  display: flex;
  align-items: center;
  justify-content: center;
  border: 1px solid #4a4a4a;
  background: #666;
`;

const Main = styled.div`
  flex: 1;
  min-height: 0;
  display: flex;
  border-top: 4px solid #2e2e2e;
`;

const Side = styled.div`
  width: 439px;
  flex: none;
  display: flex;
  flex-direction: column;
  gap: 4px;
  overflow: hidden;
  background: #3d3d3d;
  margin-right: 5px;
`;

const SideSection = styled.section`
  flex: none;
  display: flex;
  flex-direction: column;
`;

const headerBackground = `linear-gradient(#7b7b7b, #878787 55%, #7d7d7d)`;

const MainHeader = styled.div`
  height: 36px;
  line-height: 35px;
  text-indent: -10px;
  font-size: 16px;
  color: #eaeaea;
  white-space: nowrap;
  background: ${headerBackground};
  border-bottom: 1px solid #5c5c5c;
`;

const ActionArea = styled.div`
  height: 205px;
  display: flex;
  background: #6a6a6a;
`;

const ActionList = styled.div`
  width: 418px;
  flex: none;
  display: flex;
  flex-direction: column;
  border-right: 1px solid #5a5a5a;
`;

const ActionRow = styled.div`
  height: 41px;
  flex: none;
  line-height: 39px;
  padding-left: 7px;
  font-size: 13.6px;
  color: #d8d8d8;
  border-bottom: 1px solid #5a5a5a;
  background: linear-gradient(#666, #737373);
  &:last-child {
    border-bottom: none;
  }
`;

const ScrollColumn = styled.div`
  flex: 1;
  padding: 1px 2px 0 1px;
  background: linear-gradient(#6a6a6a, #737373);
`;

const ScrollButton = styled.div`
  width: 19px;
  height: 39px;
  display: flex;
  align-items: center;
  justify-content: center;
  border: 1px solid #b5b5b5;
  background: #3c3c3c;
`;

const SubHeader = styled.div`
  height: 28px;
  line-height: 27px;
  padding-left: 1px;
  color: #e2e2e2;
  white-space: nowrap;
  background: ${headerBackground};
`;

const SectionBody = styled.div`
  display: flex;
  flex-direction: column;
  gap: 5px;
  padding: 6px 7px ${(p) => p.$bottom}px 0;
  background: linear-gradient(#666, #747474);
`;

const FieldRow = styled.div`
  display: flex;
  align-items: flex-start;
  padding-left: 73px;
`;

const FieldLabel = styled.span`
  width: 73px;
  margin-left: -73px;
  padding-left: ${(p) => p.$indent || 1}px;
  line-height: 26px;
  white-space: nowrap;
`;

const TextBox = styled.div`
  flex: 1;
  height: ${(p) => p.$height}px;
  padding-left: 4px;
  line-height: 22px;
  border: 1px solid #2a2a2a;
  background: #505050;
`;

const CheckRow = styled.div`
  height: 16px;
  display: flex;
  align-items: center;
  gap: 6px;
  margin-top: 9px;
  padding-left: 73px;
  color: #dcdcdc;
`;

const CheckBox = styled.span`
  width: 16px;
  height: 16px;
  border: 1px solid #3a3a3a;
  background: #9a9a9a;
`;

const NumberField = styled.div`
  width: 88px;
  height: 26px;
  display: flex;
  border: 1px solid #242424;
  font-family: ${numFont};
`;

const NumberValue = styled.span`
  width: 59px;
  padding-right: 5px;
  line-height: 24px;
  text-align: right;
  background: linear-gradient(to right, #4a4a4a, #595959);
  color: #e8e8e8;
`;

const NumberUnit = styled.span`
  flex: 1;
  line-height: 24px;
  text-align: center;
  border-left: 1px solid #2a2a2a;
  background: ${(p) => (p.$flat ? "#585858" : "#333")};
`;

const FloorTable = styled.div`
  margin-left: -1px;
  width: 433px;
  display: grid;
  grid-template-columns: 342px 89px;
  grid-template-rows: 29px 27px 28px;
  border: 1px solid #4a4a4a;
  border-right-width: 2px;
  background: #575757;
  font-family: ${numFont};
`;

const TableHead = styled.div`
  padding-right: ${(p) => p.$shift || 0}px;
  text-align: center;
  line-height: 26px;
  background: #575757;
  font-family: ${uiFont};
`;

const NameCell = styled.div`
  display: flex;
  justify-content: space-between;
  padding-right: 5px;
  line-height: 25px;
  border-right: 1px solid #555;
  border-top: 1px solid #5f5f5f;
  background: ${(p) => (p.$dark ? "#404040" : "#717171")};
  & > span:first-child {
    margin-left: ${(p) => p.$clip}px;
    font-family: ${uiFont};
  }
`;

const ValueCell = styled.div`
  display: flex;
  justify-content: flex-end;
  gap: 11px;
  padding-right: 9px;
  line-height: 25px;
  border-top: 1px solid #5f5f5f;
  background: ${(p) => (p.$dark ? "#404040" : "#717171")};
  & > b {
    font-weight: 400;
  }
`;

const Workspace = styled.div`
  flex: 1;
  min-width: 0;
  display: flex;
  flex-direction: column;
`;

const ViewBar = styled.div`
  height: 36px;
  flex: none;
  display: flex;
  background: linear-gradient(#6a6a6a, #666);
`;

const ViewCrumb = styled.div`
  width: ${(p) => p.$width}px;
  flex: none;
  display: flex;
  align-items: center;
  gap: ${(p) => p.$gap ?? 9}px;
  padding-left: ${(p) => p.$left}px;
  white-space: nowrap;
  background: ${(p) => (p.$active ? "#3e3e3e" : "transparent")};
  border: ${(p) => (p.$active ? "1px solid #a8a8a8" : "none")};
  border-right: ${(p) => (p.$last ? "1px solid #3f3f3f" : undefined)};
`;

const CaretSlot = styled.span`
  margin-left: ${(p) => p.$left}px;
  display: flex;
`;

const ModeGroup = styled.div`
  width: 79px;
  flex: none;
  display: flex;
  align-items: center;
  padding-left: 10px;
  border-right: 1px solid #3f3f3f;
`;

const ModeButton = styled.div`
  width: 40px;
  height: 35px;
  display: flex;
  align-items: center;
  justify-content: center;
  background: #3e3e3e;
  border: 1px solid #a8a8a8;
`;

const ModeCaret = styled.span`
  margin-left: 6px;
  display: flex;
`;

const ViewGroup = styled.div`
  width: 291px;
  flex: none;
  display: flex;
  padding-left: 9px;
  border-right: 1px solid #3f3f3f;
`;

const ViewButton = styled.div`
  width: 42px;
  height: 35px;
  flex: none;
  display: flex;
  align-items: center;
  justify-content: center;
  background: ${(p) => (p.$active ? "#3e3e3e" : "transparent")};
  border: ${(p) => (p.$active ? "1px solid #a8a8a8" : "none")};
`;

const CollapseButton = styled.div`
  width: 18px;
  height: 35px;
  flex: none;
  display: flex;
  align-items: center;
  justify-content: center;
  background: #3e3e3e;
  border: 1px solid #555;
`;

const ZoomGroup = styled.div`
  display: flex;
  padding-left: 9px;
`;

const ZoomButton = styled.div`
  width: 51px;
  display: flex;
  align-items: center;
  justify-content: center;
`;

const Canvas = styled.div`
  flex: 1;
  min-height: 0;
  background: #fff;
`;

const CanvasSvg = styled.svg`
  display: block;
  width: 100%;
  height: 100%;
`;

const StatusBar = styled.div`
  height: 26px;
  flex: none;
  position: relative;
  display: flex;
  align-items: flex-end;
  justify-content: flex-end;
  padding-bottom: 3px;
  background: linear-gradient(#4a4a4a, #555);
`;

const StatusDisk = styled.div`
  display: flex;
  margin-right: 10px;
`;

const StatusText = styled.div`
  width: 57px;
  font-size: 12px;
  line-height: 13px;
  white-space: nowrap;
  overflow: hidden;
`;

const ImeBadge = styled.div`
  position: absolute;
  right: 0;
  top: -3px;
  width: 66px;
  height: 17px;
  padding-left: 3px;
  font-size: 15px;
  line-height: 17px;
  white-space: nowrap;
  overflow: hidden;
  color: #fff;
  background: #177317;
  border-radius: 3px 0 0 3px;
`;

const ImeChevron = styled.span`
  font-size: 9px;
  margin-right: 1px;
`;

const Taskbar = styled.div`
  height: 40px;
  flex: none;
  display: flex;
  align-items: stretch;
  border-top: 1px solid #1d4e62;
  background: #1b2a33;
  color: #e8edf0;
  font-size: 15px;
`;

const StartSlot = styled.div`
  width: 51px;
  flex: none;
  display: flex;
  align-items: center;
  padding-left: 11px;
`;

const IeIcon = styled.span`
  width: 19px;
  height: 24px;
  border-radius: 50%;
  background: #7fc64a;
  border: 2px solid #c8e8a8;
  color: #fff;
  font-family: "Liberation Sans", sans-serif;
  font-weight: 700;
  font-size: 17px;
  line-height: 18px;
  text-align: center;
`;

const TaskItem = styled.div`
  width: ${(p) => p.$width}px;
  margin-left: ${(p) => p.$left || 0}px;
  flex: none;
  display: flex;
  align-items: center;
  gap: ${(p) => p.$gap ?? 4}px;
  padding: 2px ${(p) => p.$pad ?? 4}px 0;
  white-space: nowrap;
  overflow: hidden;
  border-bottom: 3px solid #b5edf5;
  background: ${(p) => (p.$active ? "#3f525d" : "transparent")};
  & > span {
    font-size: 15.6px;
  }
`;

const TaskSlot = styled.div`
  width: ${(p) => p.$width}px;
  flex: none;
  display: flex;
  align-items: center;
  padding-left: 20px;
`;

const CadBadge = styled.span`
  width: 19px;
  height: 25px;
  flex: none;
  text-align: center;
  background: #f2e6e2;
  color: #b8232b;
  font-family: "Liberation Sans", sans-serif;
  font-weight: 700;
  font-size: 24px;
  line-height: 26px;
`;

const WordBadge = styled.span`
  width: 21px;
  height: 24px;
  flex: none;
  display: flex;
  align-items: flex-end;
  justify-content: flex-end;
  background: linear-gradient(#4a90d9, #4a90d9) no-repeat 0 0 / 13px 15px;
  & > i {
    width: 13px;
    height: 15px;
    text-align: center;
    font-family: "Liberation Sans", sans-serif;
    font-style: normal;
    font-size: 10px;
    line-height: 15px;
    color: #fff;
    background: #2a5aa8;
  }
`;

const DxBadge = styled.span`
  width: 20px;
  height: 25px;
  flex: none;
  margin-left: 6px;
  font-family: "Liberation Sans", sans-serif;
  font-size: 10px;
  line-height: 27px;
  text-align: center;
  color: #222;
  background: linear-gradient(#555 25%, #e8e8e8 25%);
`;

const Tray = styled.div`
  flex: 1;
  display: flex;
  align-items: center;
  justify-content: flex-end;
  overflow: hidden;
`;

const SealIcon = styled.span`
  width: 19px;
  height: 30px;
  flex: none;
  margin-right: 25px;
  background: #ad1f22;
  color: #f2e3e3;
  font-size: 16px;
  line-height: 30px;
  text-align: center;
`;

const TrayGroup = styled.div`
  display: flex;
  align-items: center;
  margin-right: -9px;
`;

const TraySlot = styled.span`
  width: 29.8px;
  flex: none;
  display: flex;
  align-items: center;
  justify-content: center;
`;
